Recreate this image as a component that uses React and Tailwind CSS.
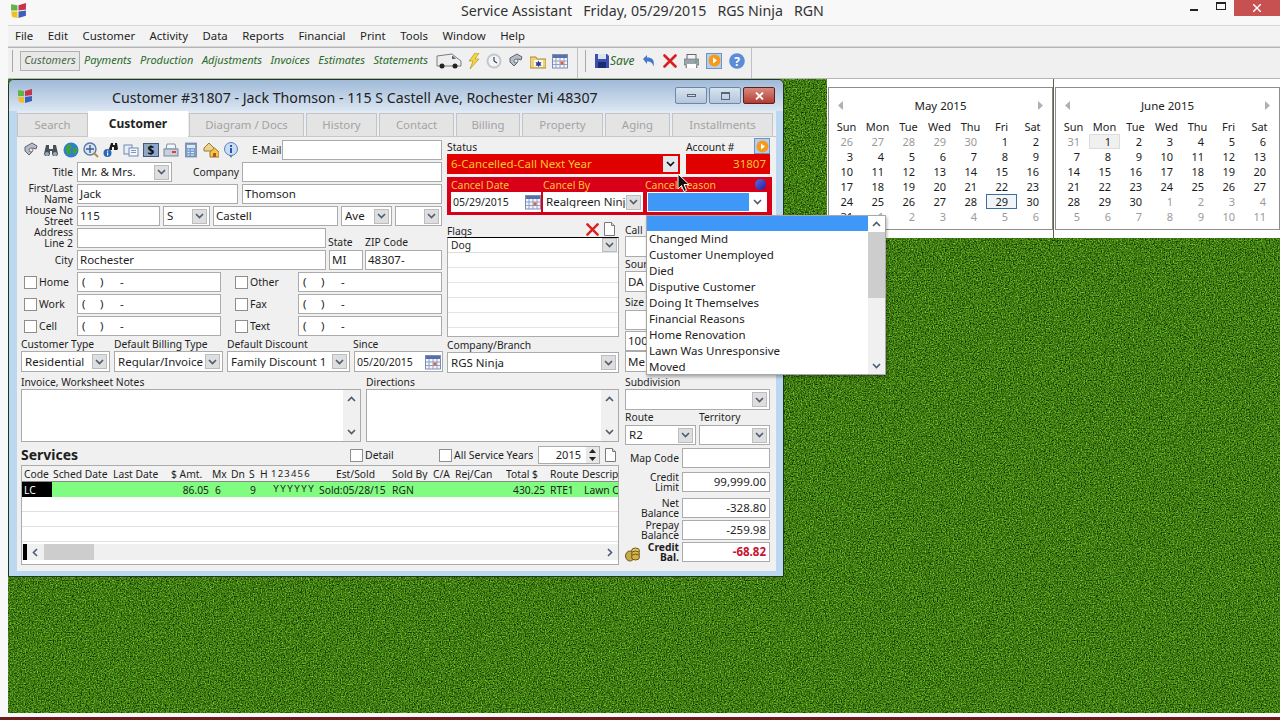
import React from 'react';

const Ico = ({ w = 16, h = 16, vb = '0 0 16 16', children }) => (
  <svg width={w} height={h} viewBox={vb} className="shrink-0">{children}</svg>
);

const Logo = ({ s = 16 }) => (
  <Ico w={s} h={s}>
    <path d="M1 2l6 1v5H1z" fill="#5fb548" />
    <path d="M8 3l7-2v6l-7 1z" fill="#c8324a" />
    <path d="M1 9h6v6l-5-1z" fill="#f0c020" />
    <path d="M8 9l7-1v5l-7 2z" fill="#3c62b8" />
  </Ico>
);
const Phone = () => (
  <Ico>
    <path d="M2 5l7-4 5 3-1 3-3-1-2 1 1 3-3 3-4-4z" fill="#b8bcc4" stroke="#5c6470" />
    <circle cx="8" cy="8" r="2" fill="#e6e8ec" stroke="#6c7480" />
  </Ico>
);
const Binoc = () => (
  <Ico>
    <path d="M3 3h3v4h4V3h3l2 9-1 2h-4l-1-2V9H7v3l-1 2H2l-1-2z" fill="#4a5058" />
    <circle cx="4" cy="12" r="2" fill="#9ab" /><circle cx="12" cy="12" r="2" fill="#9ab" />
  </Ico>
);
const Globe = () => (
  <Ico>
    <circle cx="8" cy="8" r="7.5" fill="#2f7fd0" />
    <path d="M3 4l4-2 2 3-2 3 1 4-3 1-2-4zM10 6l4 0 0 4-3 3-1-3z" fill="#3fa03a" />
  </Ico>
);
const Magnify = () => (
  <Ico>
    <circle cx="7" cy="7" r="6" fill="#d8e4f2" stroke="#5878a8" strokeWidth="1.4" />
    <path d="M7 3v8M3 7h8" stroke="#3c5c90" strokeWidth="1.4" />
    <path d="M11 11l4 4" stroke="#c09030" strokeWidth="2" />
  </Ico>
);
const InfoBinoc = () => (
  <Ico>
    <circle cx="4.5" cy="11" r="4" fill="#2a68b8" />
    <rect x="4" y="8.5" width="1.2" height="1.2" fill="#fff" /><rect x="4" y="10.5" width="1.2" height="3" fill="#fff" />
    <path d="M8 1h2v2h2V1h2l1 6-1 1h-3V5H9v3H7L6 7z" fill="#1c1c1c" />
  </Ico>
);
const Copy = () => (
  <Ico>
    <rect x="1" y="3" width="8" height="9" fill="#e8eef8" stroke="#7088b0" />
    <rect x="6" y="6" width="9" height="8" fill="#f4f6fb" stroke="#7088b0" />
    <path d="M8 8.500h5M8 10.500h5" stroke="#8098c0" />
  </Ico>
);
const Dollar = () => (
  <Ico>
    <rect x="0.500" y="1.500" width="15" height="13" fill="#90a8c8" stroke="#44587c" />
    <text x="8" y="12.500" fontSize="12" fontWeight="700" textAnchor="middle" fill="#101010">$</text>
  </Ico>
);
const Fax = () => (
  <Ico>
    <path d="M4 2h8l1 5H3z" fill="#f4f6fa" stroke="#8090a8" />
    <rect x="1" y="7" width="14" height="7" fill="#c8d0dc" stroke="#7888a0" />
    <rect x="9" y="9" width="4" height="2" fill="#e04030" />
  </Ico>
);
const Calc = () => (
  <Ico>
    <rect x="2.500" y="1" width="11" height="14" fill="#7ca0cc" stroke="#557" strokeOpacity=".5" />
    <rect x="4" y="3" width="8" height="3" fill="#dce8f4" />
    <path d="M4.500 8h2M8 8h3M4.500 10.500h2M8 10.500h3M4.500 13h2M8 13h3" stroke="#e4ecf6" />
  </Ico>
);
const House = () => (
  <Ico>
    <path d="M1 6l5-5 5 5v3H1z" fill="#e8d48c" stroke="#9c7c30" />
    <path d="M7 10l4.500-4 4.500 4v5H7z" fill="#f2c84c" stroke="#a07820" />
    <rect x="10" y="11" width="3" height="4" fill="#c05020" />
  </Ico>
);
const InfoBubble = () => (
  <Ico>
    <circle cx="8" cy="7" r="6.500" fill="#c8dcf4" stroke="#5c80b8" />
    <path d="M6 13l2 3 2-3z" fill="#5c80b8" />
    <rect x="7" y="3" width="2" height="2" fill="#2858a8" /><rect x="7" y="6" width="2" height="5" fill="#2858a8" />
  </Ico>
);
const Van = () => (
  <Ico w={26} h={16} vb="0 0 26 16">
    <path d="M1 3l15-2 5 4 4 3v5H1z" fill="#eceef0" stroke="#7c7c7c" />
    <path d="M17 3l3 3h-4V3z" fill="#5c6670" />
    <circle cx="6" cy="13" r="2.500" fill="#222" /><circle cx="19" cy="13" r="2.500" fill="#222" />
  </Ico>
);
const Bolt = () => (
  <Ico w={12} h={16} vb="0 0 12 16">
    <path d="M7 0L1 8h4l-3 8 9-10H7l4-6z" fill="#f4d63c" stroke="#a08a20" strokeWidth=".6" />
  </Ico>
);
const Clock = () => (
  <Ico>
    <circle cx="8" cy="8" r="7.500" fill="#c4c8cc" />
    <circle cx="8" cy="8" r="5.500" fill="#f2f4f6" />
    <path d="M8 8V4M8 8l3 2" stroke="#3c4450" strokeWidth="1.200" />
  </Ico>
);
const FolderStar = () => (
  <Ico>
    <path d="M0 4h6l1 2h9v9H0z" fill="#f0d078" stroke="#a88c30" />
    <rect x="4" y="7" width="9" height="7" fill="#fffbe8" />
    <path d="M8.500 7.500l1 2 2-.5-1 2 1 2-2-.5-1 1.500-1-1.500-2 .5 1-2-1-2 2 .5z" fill="#283c9c" />
  </Ico>
);
const Cal = () => (
  <Ico>
    <rect x="0.500" y="1.500" width="15" height="13.500" fill="#f4f6fb" stroke="#7c8cb4" />
    <rect x="1" y="2" width="14" height="3" fill="#5870a8" />
    <path d="M4 5v10M8 5v10M12 5v10M1 8h14M1 11.500h14" stroke="#8ea0c8" />
    <rect x="8.500" y="8.500" width="3" height="3" fill="#e06040" />
  </Ico>
);
const Floppy = () => (
  <Ico w={14} h={14} vb="0 0 14 14">
    <path d="M0 0h12l2 2v12H0z" fill="#3c50b0" />
    <rect x="3" y="0" width="8" height="5" fill="#dce4f4" />
    <rect x="3" y="8" width="8" height="6" fill="#1c2c70" />
  </Ico>
);
const Undo = () => (
  <Ico w={14} h={14} vb="0 0 14 14">
    <path d="M1 5l4-4v2.500c5 0 8 2 6.500 9-1-4-3-5-6.500-5V10z" fill="#4478cc" />
  </Ico>
);
const RedX = ({ s = 14 }) => (
  <Ico w={s} h={s} vb="0 0 14 14">
    <path d="M1.500 1.500l11 11M12.500 1.500l-11 11" stroke="#d92020" strokeWidth="2.600" strokeLinecap="round" />
  </Ico>
);
const Printer = () => (
  <Ico w={15} h={14} vb="0 0 15 14">
    <rect x="3" y="0.500" width="9" height="5" fill="#f2f4f6" stroke="#667" />
    <path d="M0 5h15v6h-2v3H2v-3H0z" fill="#9aa4ac" stroke="#556" strokeWidth=".5" />
    <rect x="11" y="6.500" width="2" height="2" fill="#44b848" />
    <rect x="3" y="10" width="9" height="4" fill="#fff" />
  </Ico>
);
const OrangeBtn = () => (
  <span className="w-[16px] h-[16px] shrink-0 flex items-center justify-center bg-[#b4cfee] border border-[#6c94c4]">
    <svg width="13" height="13" viewBox="0 0 13 13">
      <circle cx="6.500" cy="6.500" r="6" fill="#f49a1c" />
      <path d="M5 3.500l4 3-4 3z" fill="#fff" />
    </svg>
  </span>
);
const Help = () => (
  <Ico>
    <circle cx="8" cy="8" r="7.800" fill="#5c8cd8" />
    <text x="8" y="12.500" fontSize="12" fontWeight="700" textAnchor="middle" fill="#fff">?</text>
  </Ico>
);
const Doc = () => (
  <Ico w={11} h={14} vb="0 0 11 14">
    <path d="M.5.500h7l3 3v10H.5z" fill="#fdfdfd" stroke="#7a7a7a" />
    <path d="M7.500.500v3h3" fill="#d8d8d8" stroke="#7a7a7a" />
  </Ico>
);
const Coins = () => (
  <Ico>
    <ellipse cx="5" cy="10" rx="4.500" ry="5" fill="#c8a848" stroke="#6c5818" />
    <ellipse cx="10.500" cy="5" rx="4" ry="3" fill="#e4c868" stroke="#6c5818" />
    <ellipse cx="10.500" cy="8" rx="4" ry="3" fill="#d8b850" stroke="#6c5818" />
    <ellipse cx="10.500" cy="11" rx="4" ry="3" fill="#d0b048" stroke="#6c5818" />
  </Ico>
);

const Chevron = ({ dark }) => (
  <svg width="9" height="6" viewBox="0 0 9 6">
    <path d="M1 1l3.500 3.500L8 1" fill="none" stroke={dark ? '#101010' : '#4c5c70'} strokeWidth="1.600" />
  </svg>
);
const ChevUp = () => (
  <svg width="9" height="6" viewBox="0 0 9 6">
    <path d="M1 5l3.500-3.500L8 5" fill="none" stroke="#4c5c70" strokeWidth="1.600" />
  </svg>
);

const Field = ({ className = '', children }) => (
  <div className={`h-full shrink-0 border border-[#ababab] bg-white px-[2px] text-[11.500px] leading-[18px] flex items-center whitespace-nowrap overflow-hidden ${className}`}>
    {children}
  </div>
);

const Select = ({ className = '', value }) => (
  <div className={`h-full shrink-0 border border-[#ababab] bg-white pl-[3px] pr-[2px] py-[2px] text-[11.500px] flex items-center justify-between overflow-hidden ${className}`}>
    <span className="whitespace-nowrap overflow-hidden flex-1">{value}</span>
    <span className="w-[15px] h-[15px] shrink-0 bg-[#dedede] border border-[#bdbdbd] flex items-center justify-center">
      <Chevron />
    </span>
  </div>
);

const Check = ({ label, className = '' }) => (
  <div className={`flex items-center gap-[2px] text-[10.500px] whitespace-nowrap shrink-0 ${className}`}>
    <span className="w-[13px] h-[13px] bg-white border border-[#8e8e8e] shrink-0" />
    <span>{label}</span>
  </div>
);

const Tab = ({ className = '', children }) => (
  <div className={`h-[23px] shrink-0 bg-[#e4e4e4] border border-[#c4c4c4] border-b-0 text-[#a3a3a3] text-[11.400px] flex items-center justify-center mt-[2px] ${className}`}>
    {children}
  </div>
);

const PhoneMask = () => (
  <>
    <span className="w-[18px] shrink-0">(</span>
    <span className="w-[20px] shrink-0">)</span>
    <span>-</span>
  </>
);
const PhoneRow = ({ a, b }) => (
  <div className="flex items-center h-[20px] mb-[2px]">
    <Check label={a} className="ml-[3px] w-[53px]" />
    <Field className="w-[144px] pl-[4px]"><PhoneMask /></Field>
    <Check label={b} className="ml-[14px] w-[63px]" />
    <Field className="w-[144px] pl-[4px]"><PhoneMask /></Field>
  </div>
);

const Cols = ['Sun', 'Mon', 'Tue', 'Wed', 'Thu', 'Fri', 'Sat'];
const MAY = [
  [26, 27, 28, 29, 30, 1, 2], [3, 4, 5, 6, 7, 8, 9], [10, 11, 12, 13, 14, 15, 16],
  [17, 18, 19, 20, 21, 22, 23], [24, 25, 26, 27, 28, 29, 30], [31, 1, 2, 3, 4, 5, 6],
];
const JUNE = [
  [31, 1, 2, 3, 4, 5, 6], [7, 8, 9, 10, 11, 12, 13], [14, 15, 16, 17, 18, 19, 20],
  [21, 22, 23, 24, 25, 26, 27], [28, 29, 30, 1, 2, 3, 4], [5, 6, 7, 8, 9, 10, 11],
];

const Month = ({ title, rows, className = '', today, selected }) => (
  <div className={`w-[225px] h-[143px] border border-[#8d8d8d] bg-white px-[2px] shrink-0 ${className}`}>
    <div className="flex items-center justify-between h-[30px] pt-[5px] px-[7px] text-[#a0a0a0]">
      <svg width="5" height="9" viewBox="0 0 5 9"><path d="M5 0v9L0 4.500z" fill="#b0b0b0" /></svg>
      <span className="text-[#222] text-[11.500px]">{title}</span>
      <svg width="5" height="9" viewBox="0 0 5 9"><path d="M0 0v9l5-4.500z" fill="#b0b0b0" /></svg>
    </div>
    <div className="grid grid-cols-[repeat(7,31px)] text-[11px] h-[15px] mt-[1px] leading-[15px]">
      {Cols.map(c => <div key={c} className="text-center text-[#222]">{c}</div>)}
    </div>
    <div>
      {rows.map((r, i) => (
        <div key={i} className="grid grid-cols-[repeat(7,31px)] text-[11px] h-[15px] leading-[13px]">
          {r.map((d, j) => {
            const muted = (i === 0 && d > 20) || (i >= 4 && d < 15);
            const isSel = selected && selected[0] === i && selected[1] === j;
            const isToday = today && today[0] === i && today[1] === j;
            return (
              <div key={j} className={`text-right pr-[8px] border ${isSel ? 'border-[#3a6ea5] bg-[#f2f5f8]' : isToday ? 'border-[#dcdcdc] bg-[#f0f0f0]' : 'border-transparent'} ${muted ? 'text-[#9a9a9a]' : 'text-[#1c1c1c]'}`}>
                {d}
              </div>
            );
          })}
        </div>
      ))}
    </div>
  </div>
);

const hdr = [
  ['w-[29px]', 'Code'], ['w-[60px]', 'Sched Date'], ['w-[58px]', 'Last Date'], ['w-[41px]', '$ Amt.'],
  ['w-[19px]', 'Mx'], ['w-[18px]', 'Dn'], ['w-[11px]', 'S'], ['w-[11px]', 'H'], ['w-[48px] tracking-[1.2px] text-[9.500px]', '123456'],
  ['w-[73px] text-center', 'Est/Sold'], ['w-[41px]', 'Sold By'], ['w-[22px]', 'C/A'], ['w-[51px]', 'Rej/Can'],
  ['w-[44px]', 'Total $'], ['w-[32px]', 'Route'], ['w-[36px]', 'Descrip'],
];

const Menu = ['File', 'Edit', 'Customer', 'Activity', 'Data', 'Reports', 'Financial', 'Print', 'Tools', 'Window', 'Help'];
const Nav = ['Payments', 'Production', 'Adjustments', 'Invoices', 'Estimates', 'Statements'];
const Reasons = ['Changed Mind', 'Customer Unemployed', 'Died', 'Disputive Customer', 'Doing It Themselves', 'Financial Reasons', 'Home Renovation', 'Lawn Was Unresponsive', 'Moved'];

export default function App() {
  return (
    <div className="relative w-[1280px] h-[720px] overflow-hidden flex flex-col bg-[#f8f8f8] text-[#1e1e1e] font-['Noto_Sans',sans-serif]">
      {/* app title bar */}
      <div className="h-[25px] shrink-0 flex items-center relative">
        <div className="ml-[10px] -mt-[4px]"><Logo s={17} /></div>
        <div className="absolute left-[461px] top-0 text-[14.200px] whitespace-pre text-[#333]">Service Assistant   Friday, 05/29/2015   RGS Ninja   RGN</div>
        <div className="ml-auto flex items-start self-start">
          <span className="w-[8px] h-[2px] bg-[#222] mt-[9px] mr-[18px]" />
          <span className="w-[10px] h-[8px] border border-t-2 border-[#222] mt-[2px] mr-[8px]" />
          <span className="w-[46px] h-[16px] bg-[#c75050] text-white flex items-center justify-center">
            <svg width="8" height="8" viewBox="0 0 8 8"><path d="M0 0l8 8M8 0L0 8" stroke="#fff" strokeWidth="1.400" /></svg>
          </span>
        </div>
      </div>

      {/* menu bar */}
      <div className="ml-[8px] h-[22px] shrink-0 bg-[#f3f3f4] border-y border-[#d6d6d6] flex items-center pl-[7px] gap-[14.500px] text-[11.400px]">
        {Menu.map(m => <span key={m}>{m}</span>)}
      </div>

      {/* toolbar */}
      <div className="ml-[8px] h-[32px] shrink-0 bg-[#f0f0f0] border-y border-[#b5b5b5] flex items-stretch">
        <div className="w-[570px] border-r border-[#c0c0c0] flex items-center pl-[4px] pb-[5px] text-[11px] italic text-[#2c6a2c]">
          <span className="w-[1px] h-[22px] bg-[#a8a8a8] mr-[7px]" />
          <span className="w-[60px] h-[20px] shrink-0 bg-[#e8e8e8] border border-[#b0b0b0] flex items-center justify-center text-[#4c6a4c] mr-[4px]">Customers</span>
          <div className="flex gap-[8.500px]">
            {Nav.map(n => <span key={n}>{n}</span>)}
          </div>
          <div className="flex items-center gap-[6px] ml-[8px]">
            <Van /><Bolt /><Clock /><Phone /><FolderStar /><Cal />
          </div>
        </div>
        <div className="w-[172px] ml-[2px] border-r border-[#c0c0c0] flex items-center pl-[5px] pb-[5px]">
          <span className="w-[1px] h-[22px] bg-[#a8a8a8] mr-[9px]" />
          <Floppy />
          <span className="text-[12px] italic text-[#2c6a2c] ml-[1px] mr-[8px]">Save</span>
          <div className="flex items-center gap-[7px]"><Undo /><RedX /><Printer /><OrangeBtn /><Help /></div>
        </div>
      </div>

      {/* desktop */}
      <main className="relative flex-1 ml-[8px] mb-[7px] overflow-hidden bg-[#3e7c12]">
        <svg className="absolute inset-0 w-full h-full">
          <filter id="grass" x="0" y="0" width="100%" height="100%" colorInterpolationFilters="sRGB">
            <feTurbulence type="fractalNoise" baseFrequency="0.75" numOctaves="3" seed="4" />
            <feColorMatrix values="0.6 0 0 0 -0.05  1 0 0 0 -0.02  0.3 0 0 0 -0.08  0 0 0 0 1" />
          </filter>
          <rect width="100%" height="100%" filter="url(#grass)" />
        </svg>

        {/* calendars */}
        <div className="absolute left-[819px] top-0 w-[453px] h-[159px] bg-white flex pt-[8px] pl-[1px]">
          <Month title="May 2015" rows={MAY} selected={[4, 5]} />
          <div className="w-[1px] -mt-[8px] h-[159px] bg-[#57634a] shrink-0" />
          <Month title="June 2015" rows={JUNE} today={[0, 1]} className="ml-[1px] w-[224px]" />
        </div>

        {/* customer window */}
        <section className="absolute left-0 top-0 w-[776px] h-[498px] border border-[#1d3a1f] rounded-t-[6px] bg-[#bcd7f0] flex flex-col overflow-hidden">
          <header className="h-[31px] shrink-0 relative flex items-center bg-gradient-to-b from-[#a0bad8] to-[#dbe6f2]">
            <div className="ml-[8px]"><Logo s={16} /></div>
            <div className="absolute left-[103px] top-[7px] text-[14.200px] whitespace-nowrap text-[#222]">Customer #31807 - Jack Thomson - 115 S Castell Ave, Rochester Mi 48307</div>
            <div className="ml-auto mr-[8px] flex gap-[2px]">
              <span className="w-[32px] h-[17px] rounded-[2px] border border-[#6f87a3] bg-gradient-to-b from-[#d8e3ef] to-[#b3c6da] flex items-center justify-center">
                <span className="w-[9px] h-[3px] bg-[#d8d8d8] border border-[#56657a]" />
              </span>
              <span className="w-[32px] h-[17px] rounded-[2px] border border-[#6f87a3] bg-gradient-to-b from-[#d8e3ef] to-[#b3c6da] flex items-center justify-center">
                <span className="w-[9px] h-[8px] border border-t-2 border-[#56657a]" />
              </span>
              <span className="w-[32px] h-[17px] rounded-[2px] border border-[#5c2020] bg-gradient-to-b from-[#d58a80] to-[#b33a30] flex items-center justify-center">
                <svg width="9" height="8" viewBox="0 0 9 8"><path d="M1 .5l7 7M8 .5l-7 7" stroke="#fff" strokeWidth="1.800" /></svg>
              </span>
            </div>
          </header>

          <div className="flex-1 ml-[8px] mr-[7px] mb-[5px] flex flex-col min-h-0">
            {/* tabs */}
            <div className="h-[25px] shrink-0 flex items-end gap-[2px] bg-gradient-to-b from-[#e2eaf4] to-[#f0f2f4]">
              <Tab className="w-[71px] -mr-[2px]">Search</Tab>
              <div className="w-[100px] h-[26px] shrink-0 bg-white text-[12px] font-bold flex items-center justify-center text-[#222] relative z-10 -mb-[1px]">Customer</div>
              <Tab className="w-[115px] -ml-[1px]">Diagram / Docs</Tab>
              <Tab className="w-[71px]">History</Tab>
              <Tab className="w-[75px]">Contact</Tab>
              <Tab className="w-[64px]">Billing</Tab>
              <Tab className="w-[81px]">Property</Tab>
              <Tab className="w-[65px]">Aging</Tab>
              <Tab className="w-[101px]">Installments</Tab>
            </div>

            <div className="flex-1 bg-[#f0f0f0] border-t border-[#c8c8c8] pl-[4px] pr-[2px] pt-[3px] text-[10.300px] leading-[12px] min-h-0">
              {/* upper form */}
              <div className="flex items-start">
                <div className="w-[421px] shrink-0">
                  <div className="flex items-center h-[20px] mb-[2px]">
                    <div className="w-[231px] pl-[2px] flex items-center gap-[4px] -mt-[1px]">
                      <Phone /><Binoc /><Globe /><Magnify /><InfoBinoc /><Copy /><Dollar /><Fax /><Calc /><House /><InfoBubble />
                    </div>
                    <div className="w-[30px] shrink-0 whitespace-nowrap">E-Mail</div>
                    <Field className="w-[160px]" />
                  </div>
                  <div className="flex items-center h-[20px] mb-[2px]">
                    <div className="w-[52px] text-right mr-[4px] shrink-0">Title</div>
                    <Select className="w-[95px]" value="Mr. & Mrs." />
                    <div className="w-[67px] text-right mr-[3px] shrink-0">Company</div>
                    <Field className="w-[200px]" />
                  </div>
                  <div className="flex items-center h-[20px] mb-[2px]">
                    <div className="w-[52px] text-right mr-[4px] shrink-0 leading-[11px]">First/Last Name</div>
                    <Field className="w-[161px]">Jack</Field>
                    <Field className="w-[200px] ml-[4px]">Thomson</Field>
                  </div>
                  <div className="flex items-center h-[20px] mb-[2px] gap-[3px]">
                    <div className="w-[52px] text-right mr-[1px] shrink-0 leading-[11px]">House No Street</div>
                    <Field className="w-[83px]">115</Field>
                    <Select className="w-[47px]" value="S" />
                    <Field className="w-[125px]">Castell</Field>
                    <Select className="w-[51px]" value="Ave" />
                    <Select className="w-[47px]" value="" />
                  </div>
                  <div className="flex items-center h-[20px] mb-[2px]">
                    <div className="w-[52px] text-right mr-[4px] shrink-0 leading-[11px]">Address Line 2</div>
                    <Field className="w-[249px]" />
                    <div className="flex self-end ml-[2px]"><span className="w-[37px]">State</span><span>ZIP Code</span></div>
                  </div>
                  <div className="flex items-center h-[20px] mb-[2px]">
                    <div className="w-[52px] text-right mr-[4px] shrink-0">City</div>
                    <Field className="w-[249px]">Rochester</Field>
                    <Field className="w-[34px] ml-[3px]">MI</Field>
                    <Field className="w-[77px] ml-[2px]">48307-</Field>
                  </div>
                  <PhoneRow a="Home" b="Other" />
                  <PhoneRow a="Work" b="Fax" />
                  <PhoneRow a="Cell" b="Text" />
                  <div className="flex h-[12px] mt-[1px] mb-[1px]">
                    <span className="w-[93px]">Customer Type</span>
                    <span className="w-[113px]">Default Billing Type</span>
                    <span className="w-[126px]">Default Discount</span>
                    <span>Since</span>
                  </div>
                  <div className="flex h-[21px] gap-[4px]">
                    <Select className="w-[89px]" value="Residential" />
                    <Select className="w-[109px]" value="Regular/Invoice" />
                    <Select className="w-[123px]" value="Family Discount 1" />
                    <div className="h-full flex border border-[#ababab] bg-white w-[89px] items-center text-[10.500px] pl-[2px] justify-between shrink-0">
                      05/20/2015
                      <span className="pr-[1px] flex"><Cal /></span>
                    </div>
                  </div>
                </div>

                {/* status column */}
                <div className="ml-[5px] w-[325px] shrink-0">
                  <div className="flex -mt-[2px]">
                    <div className="w-[233px]">
                      <div className="h-[13px] pt-[3px]">Status</div>
                    </div>
                    <div className="ml-[6px] flex-1 flex justify-between pr-[2px] items-start h-[15px]">
                      <span className="pt-[3px]">Account #</span>
                      <OrangeBtn />
                    </div>
                  </div>
                  <div className="flex h-[20px] mt-[1px]">
                    <div className="w-[233px] bg-[#e00000] text-[#ffc62a] text-[11.500px] flex items-center justify-between pl-[4px] pr-[2px]">
                      6-Cancelled-Call Next Year
                      <span className="w-[15px] h-[16px] bg-[#e4e6ec] flex items-center justify-center"><Chevron dark /></span>
                    </div>
                    <div className="ml-[6px] w-[84px] bg-[#e00000] text-[#ffc62a] text-[11.500px] flex items-center justify-end pr-[4px]">31807</div>
                  </div>
                  <div className="mt-[3px] h-[38px] bg-[#d80018] pl-[4px] pr-[6px] relative">
                    <div className="flex h-[14px] items-end text-[#ffc62a] text-[10.400px]">
                      <span className="w-[92px]">Cancel Date</span>
                      <span className="w-[102px]">Cancel By</span>
                      <span>Cancel Reason</span>
                      <span className="absolute right-[6px] top-[2px] w-[11px] h-[11px] rounded-full bg-gradient-to-br from-[#6a66e0] to-[#1c18a0]" />
                    </div>
                    <div className="flex h-[20px] mt-[1px] gap-[2px]">
                      <div className="w-[90px] bg-white flex items-center justify-between pl-[2px] text-[10.500px] shrink-0">05/29/2015<Cal /></div>
                      <Select className="w-[100px] border-0" value="Realgreen Ninja" />
                      <div className="w-[120px] ml-[2px] bg-white flex items-center p-[1px] shrink-0">
                        <span className="flex-1 h-full bg-[#3f97f7]" />
                        <span className="w-[17px] flex items-center justify-center"><Chevron /></span>
                      </div>
                    </div>
                  </div>

                  <div className="flex mt-[9px]">
                    <div className="w-[172px] shrink-0">
                      <div className="flex items-center h-[16px] -mt-[3px]">
                        <span className="mt-[3px]">Flags</span>
                        <span className="ml-auto mr-[4px] flex gap-[5px] items-center"><RedX s={13} /><Doc /></span>
                      </div>
                      <div className="h-[100px] bg-white border border-[#ababab] border-t-black overflow-hidden">
                        <div className="h-[15px] pl-[3px] border-b border-[#dedede] flex items-center justify-between pr-[1px]">
                          Dog
                          <span className="w-[15px] h-[14px] bg-[#dedede] border border-[#bdbdbd] flex items-center justify-center"><Chevron /></span>
                        </div>
                        {[0, 1, 2, 3, 4].map(i => <div key={i} className="h-[15px] border-b border-[#e4e4e4]" />)}
                      </div>
                      <div className="h-[12px] mt-[2px] mb-[1px]">Company/Branch</div>
                      <Select className="!h-[21px] w-[172px]" value="RGS Ninja" />
                    </div>
                    <div className="ml-[6px] w-[145px] shrink-0">
                      <div className="h-[12px]">Call</div>
                      <Field className="!h-[21px] w-[145px]" />
                      <div className="h-[12px] mt-[1px]">Source</div>
                      <Field className="!h-[21px] w-[145px] mt-[1px]">DA</Field>
                      <div className="h-[12px] mt-[4px]">Size</div>
                      <Field className="!h-[20px] w-[145px] mt-[2px]" />
                      <Field className="!h-[20px] w-[145px] mt-[1px]">100</Field>
                      <Field className="!h-[21px] w-[145px]">Me</Field>
                    </div>
                  </div>
                </div>
              </div>

              {/* lower form */}
              <div className="flex items-start mt-[2px]">
                <div className="w-[598px] shrink-0">
                  <div className="flex h-[14px] items-center">
                    <span className="w-[345px]">Invoice, Worksheet Notes</span>
                    <span>Directions</span>
                  </div>
                  <div className="flex h-[53px]">
                    <div className="w-[340px] bg-white border border-[#ababab] flex justify-end">
                      <div className="w-[17px] bg-[#f0f0f0] flex flex-col items-center justify-between py-[6px]"><ChevUp /><Chevron /></div>
                    </div>
                    <div className="ml-[5px] w-[253px] bg-white border border-[#ababab] flex justify-end">
                      <div className="w-[17px] bg-[#f0f0f0] flex flex-col items-center justify-between py-[6px]"><ChevUp /><Chevron /></div>
                    </div>
                  </div>
                  <div className="flex items-center h-[23px] pt-[3px]">
                    <span className="text-[14px] font-bold w-[329px]">Services</span>
                    <Check label="Detail" className="w-[89px]" />
                    <Check label="All Service Years" className="w-[99px]" />
                    <div className="w-[62px] h-[18px] bg-white border border-[#ababab] flex items-center justify-end text-[11px] shrink-0">
                      2015
                      <span className="ml-[5px] w-[13px] h-full bg-[#e8e8e8] flex flex-col items-center justify-around">
                        <svg width="7" height="4" viewBox="0 0 7 4"><path d="M3.500 0L7 4H0z" fill="#222" /></svg>
                        <svg width="7" height="4" viewBox="0 0 7 4"><path d="M0 0h7L3.500 4z" fill="#222" /></svg>
                      </span>
                    </div>
                    <span className="ml-[5px] flex"><Doc /></span>
                  </div>
                  <div className="h-[100px] bg-white border border-[#ababab] overflow-hidden flex flex-col">
                    <div className="h-[16px] shrink-0 flex items-center bg-[#f2f2f2] pl-[2px] border-b border-[#888] whitespace-nowrap">
                      {hdr.map(([w, t]) => <span key={t} className={`overflow-hidden shrink-0 ${w}`}>{t}</span>)}
                    </div>
                    <div className="h-[15px] shrink-0 flex items-center bg-[#80fc80] whitespace-nowrap">
                      <span className="w-[30px] bg-black text-white pl-[2px] h-full flex items-center shrink-0">LC</span>
                      <span className="w-[157px] text-right shrink-0">86.05</span>
                      <span className="w-[32px] pl-[6px] shrink-0">6</span>
                      <span className="w-[32px] pl-[9px] shrink-0">9</span>
                      <span className="w-[46px] shrink-0 font-['Liberation_Mono',monospace] tracking-[1px] text-[10px]">YYYYYY</span>
                      <span className="w-[73px] shrink-0">Sold:05/28/15</span>
                      <span className="w-[121px] shrink-0">RGN</span>
                      <span className="w-[37px] shrink-0">430.25</span>
                      <span className="w-[34px] shrink-0">RTE1</span>
                      <span className="overflow-hidden">Lawn C</span>
                    </div>
                    {[0, 1, 2].map(i => <div key={i} className="h-[15px] shrink-0 border-b border-[#e0e0e0]" />)}
                    <div className="h-[16px] shrink-0 flex items-center bg-[#f0f0f0] mt-[2px]">
                      <span className="w-[4px] h-full bg-black ml-[1px]" />
                      <span className="ml-[5px] w-[12px] flex items-center"><svg width="6" height="9" viewBox="0 0 6 9"><path d="M5 1L1.500 4.500 5 8" fill="none" stroke="#4c5c70" strokeWidth="1.600" /></svg></span>
                      <span className="w-[50px] h-full bg-[#cdcdcd]" />
                      <span className="ml-auto mr-[5px] flex"><svg width="6" height="9" viewBox="0 0 6 9"><path d="M1 1l3.500 3.500L1 8" fill="none" stroke="#4c5c70" strokeWidth="1.600" /></svg></span>
                    </div>
                  </div>
                </div>

                <div className="ml-[6px] w-[145px] shrink-0">
                  <div className="h-[12px] mt-[1px]">Subdivision</div>
                  <Select className="!h-[21px] w-[145px] mt-[1px]" value="" />
                  <div className="flex h-[12px] mt-[1px] mb-[2px]"><span className="w-[74px]">Route</span><span>Territory</span></div>
                  <div className="flex h-[20px] justify-between">
                    <Select className="w-[71px]" value="R2" />
                    <Select className="w-[71px]" value="" />
                  </div>
                  <div className="flex h-[20px] mt-[3px] items-center">
                    <span className="w-[54px] text-right mr-[3px] shrink-0">Map Code</span>
                    <Field className="w-[88px]" />
                  </div>
                  <div className="flex h-[20px] mt-[4px] items-center">
                    <span className="w-[54px] text-right mr-[3px] shrink-0 leading-[10px]">Credit Limit</span>
                    <Field className="w-[88px] justify-end pr-[3px]">99,999.00</Field>
                  </div>
                  <div className="flex h-[20px] mt-[6px] items-center">
                    <span className="w-[54px] text-right mr-[3px] shrink-0 leading-[10px]">Net Balance</span>
                    <Field className="w-[88px] justify-end pr-[3px]">-328.80</Field>
                  </div>
                  <div className="flex h-[20px] mt-[2px] items-center">
                    <span className="w-[54px] text-right mr-[3px] shrink-0 leading-[10px]">Prepay Balance</span>
                    <Field className="w-[88px] justify-end pr-[3px]">-259.98</Field>
                  </div>
                  <div className="flex h-[20px] mt-[2px] items-center">
                    <span className="flex w-[18px] mt-[3px]"><Coins /></span>
                    <span className="w-[36px] text-right mr-[3px] shrink-0 leading-[10px] font-bold">Credit Bal.</span>
                    <Field className="w-[88px] justify-end pr-[3px] font-bold text-[#c8102e]">-68.82</Field>
                  </div>
                </div>
              </div>
            </div>
          </div>
        </section>
      </main>

      {/* bottom edge */}
      <div className="absolute left-0 right-0 bottom-0 h-[3px] bg-[#6c1c1c]" />

      {/* open cancel reason list */}
      <div className="absolute left-[646px] top-[215px] w-[240px] h-[160px] bg-white border border-[#a8a8a8] shadow-[1px_2px_3px_rgba(0,0,0,0.3)] flex text-[11.500px]">
        <div className="flex-1">
          <div className="h-[15px] bg-[#3f97f7]" />
          {Reasons.map(r => <div key={r} className="h-[16px] leading-[16px] pl-[2px] whitespace-nowrap text-[#222]">{r}</div>)}
        </div>
        <div className="w-[17px] bg-[#f0f0f0] flex flex-col relative">
          <div className="h-[16px] flex items-center justify-center bg-white"><ChevUp /></div>
          <div className="h-[66px] bg-[#cdcdcd]" />
          <div className="mt-auto h-[16px] flex items-center justify-center"><Chevron /></div>
        </div>
      </div>

      {/* mouse pointer */}
      <svg className="absolute left-[677px] top-[173px]" width="13" height="20" viewBox="0 0 13 20">
        <path d="M1 1v15l3.500-3.500 2.500 6 2.500-1-2.500-6H12z" fill="#111" stroke="#fff" strokeWidth="1" />
      </svg>
    </div>
  );
}
